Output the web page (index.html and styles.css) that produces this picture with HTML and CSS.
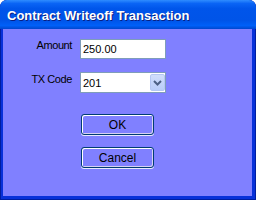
FILE: index.html
```html
<!doctype html>
<html>
<head>
<meta charset="utf-8">
<title>Contract Writeoff Transaction</title>
<link rel="stylesheet" href="styles.css">
</head>
<body>
	<div class="window">
		<div class="titlebar">Contract Writeoff Transaction</div>
		<div class="client">
			<div class="form">
				<div class="label">Amount</div>
				<div class="textbox">250.00</div>
				<div class="label label-code">TX Code</div>
				<div class="combo">
					<span class="combo-text">201</span>
					<span class="combo-btn">
						<svg width="9" height="6" viewBox="0 0 9 6"><path d="M1 1 L4.5 4.5 L8 1" fill="none" stroke="#4d6185" stroke-width="2"/></svg>
					</span>
				</div>
			</div>
			<div class="buttons">
				<div class="btn">OK</div>
				<div class="btn">Cancel</div>
			</div>
		</div>
	</div>
</body>
</html>
```

FILE: styles.css
```css
*{
	margin: 0;
	padding: 0;
	box-sizing: border-box;
}
body{
	background: #fff;
	font-family: "Liberation Sans", Arial, sans-serif;
	font-size: 11px;
}
.window{
	width: 256px;
	height: 200px;
	display: flex;
	flex-direction: column;
	background: #0831d9;
	border-radius: 7px 7px 0 0;
	padding: 0 4px 4px 3px;
	box-shadow: inset 0 0 0 1px #001ea0;
}
.titlebar{
	height: 29px;
	margin: 0 -4px 0 -3px;
	padding: 8px 0 0 7px;
	border-radius: 7px 7px 0 0;
	background: linear-gradient(to bottom, #2f8cff 0%, #0a64f5 12%, #0055ea 30%, #0054e8 70%, #0060f8 88%, #0047d0 100%);
	color: #fff;
	font-weight: bold;
	font-size: 13px;
	text-shadow: 1px 1px 0 #0a1e80;
}
.client{
	flex: 1;
	background: #8080ff;
	padding-top: 10px;
}
.form{
	display: grid;
	grid-template-columns: 69px 86px;
	column-gap: 8px;
	row-gap: 13px;
	align-items: start;
}
.label{
	text-align: right;
	letter-spacing: -0.4px;
	color: #000;
}
.label-code{
	padding-top: 1px;
}
.textbox{
	height: 20px;
	background: #fff;
	border: 1px solid #7f9db9;
	padding-left: 2px;
	display: flex;
	align-items: center;
}
.combo{
	height: 21px;
	background: #fff;
	border: 1px solid #7f9db9;
	padding: 1px 0 1px 2px;
	display: flex;
	align-items: center;
	justify-content: space-between;
}
.combo-btn{
	width: 15px;
	height: 17px;
	background: linear-gradient(to bottom, #d0ddfb, #b9cdf9);
	border: 1px solid #b4c7f3;
	border-radius: 2px;
	display: flex;
	align-items: center;
	justify-content: center;
}
.buttons{
	margin: 21px 0 0 78px;
	display: flex;
	flex-direction: column;
	gap: 12px;
}
.btn{
	width: 73px;
	height: 21px;
	border: 1px solid #003c74;
	border-radius: 3px;
	background: #8080ff;
	box-shadow: inset 1px 1px 0 #ffffff, inset -1px -1px 0 #d6d0f0, 0 1px 0 #e8e8ff;
	display: flex;
	align-items: center;
	justify-content: center;
	color: #000;
	font-size: 12px;
}
```
